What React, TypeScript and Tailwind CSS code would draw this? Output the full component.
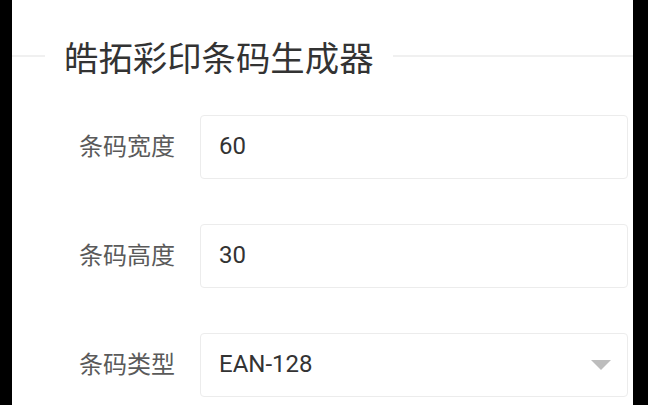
import React from "react";

const FONT = "font-['Roboto','Noto_Sans_CJK_SC',sans-serif]";

// 单行输入
const Field: React.FC<{ label: string; value: string; select?: boolean }> = ({
  label,
  value,
  select,
}) => {
  return (
    <div className="flex items-center">
      <div className="w-[188px] pr-[25px] pb-[4px] text-right text-[24px] leading-none text-[#5a5a5a] font-['Noto_Sans_CJK_SC',sans-serif]">
        {label}
      </div>
      <div className="flex items-center justify-between w-[428px] h-[64px] border border-[#ececec] rounded-[4px] pl-[18px] pr-[16px]">
        <span className="pb-[3px] text-[24px] text-[#333]">{value}</span>
        {select && (
          <svg width="20" height="10" viewBox="0 0 20 10">
            <path d="M0 0 L20 0 L10 10 Z" fill="#bdbdbd" />
          </svg>
        )}
      </div>
    </div>
  );
};

export default function App() {
  return (
    <div className={`flex w-[648px] h-[405px] bg-black overflow-hidden ${FONT}`}>
      <div className="ml-[12px] w-[621px] h-full bg-white">
        {/* 标题 */}
        <div className="flex items-center mt-[36px] h-[40px]">
          <div className="w-[33px] h-[2px] bg-[#f0f0f0]" />
          <h1 className="px-[19px] text-[34.4px] leading-[40px] text-[#333] font-['Noto_Sans_CJK_SC',sans-serif]">
            皓拓彩印条码生成器
          </h1>
          <div className="flex-1 h-[2px] bg-[#f0f0f0]" />
        </div>

        <div className="flex flex-col gap-[45px] mt-[39px]">
          <Field label="条码宽度" value="60" />
          <Field label="条码高度" value="30" />
          <Field label="条码类型" value="EAN-128" select />
        </div>
      </div>
    </div>
  );
}
